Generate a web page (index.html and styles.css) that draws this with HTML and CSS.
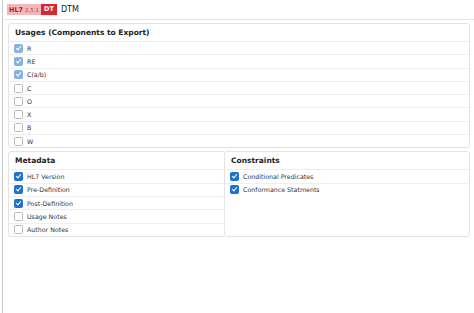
FILE: index.html
```html
<!DOCTYPE html>
<html lang="en">
<head>
    <meta charset="UTF-8">
    <title>DTM Export</title>
    <link rel="stylesheet" href="styles.css">
</head>
<body>
    <div class="page">
        <div class="header">
            <span class="badge"><b>HL7</b> <small>2.5.1</small></span><span class="badge-dt">DT</span>
            <span class="name">DTM</span>
        </div>
        <div class="content">
            <div class="panel">
                <div class="panel-title">Usages (Components to Export)</div>
                <div class="row"><span class="box faded"></span>R</div>
                <div class="row"><span class="box faded"></span>RE</div>
                <div class="row"><span class="box faded"></span>C(a/b)</div>
                <div class="row"><span class="box"></span>C</div>
                <div class="row"><span class="box"></span>O</div>
                <div class="row"><span class="box"></span>X</div>
                <div class="row"><span class="box"></span>B</div>
                <div class="row"><span class="box"></span>W</div>
            </div>
            <div class="columns">
                <div class="panel">
                    <div class="panel-title">Metadata</div>
                    <div class="row"><span class="box checked"></span>HL7 Version</div>
                    <div class="row"><span class="box checked"></span>Pre-Definition</div>
                    <div class="row"><span class="box checked"></span>Post-Definition</div>
                    <div class="row"><span class="box"></span>Usage Notes</div>
                    <div class="row"><span class="box"></span>Author Notes</div>
                </div>
                <div class="panel">
                    <div class="panel-title">Constraints</div>
                    <div class="row"><span class="box checked"></span>Conditional Predicates</div>
                    <div class="row"><span class="box checked"></span>Conformance Statments</div>
                </div>
            </div>
        </div>
    </div>
</body>
</html>
```
FILE: styles.css
```css
body {
    margin: 0;
    font-family: 'DejaVu Sans', Verdana, sans-serif;
    color: #333;
    background: #fff;
}

.page {
    margin-left: 2px;
    border-left: 1px solid #c8c8c8;
    min-height: 313px;
    box-sizing: border-box;
}

.header {
    height: 20px;
    box-sizing: border-box;
    border-bottom: 1px solid #e6e6e6;
    display: flex;
    align-items: center;
    padding-left: 4px;
}

.badge {
    background: #f3b6ba;
    color: #a8232b;
    font-size: 6px;
    padding: 1px 2px;
    height: 9px;
    line-height: 9px;
}

.badge b {
    font-size: 6.5px;
}

.badge small {
    font-size: 5.5px;
    color: #b8474f;
}

.badge-dt {
    background: #d9262f;
    color: #fff;
    font-weight: bold;
    font-size: 6.5px;
    padding: 1px 3px;
    height: 9px;
    line-height: 9px;
}

.name {
    font-size: 8px;
    margin-left: 4px;
    color: #222;
}

.content {
    padding: 3px 4px 0 5px;
    display: flex;
    flex-direction: column;
    gap: 3px;
}

.panel {
    border: 1px solid #e4e4e4;
    border-radius: 3px;
}

.panel-title {
    height: 17px;
    line-height: 17px;
    font-weight: bold;
    font-size: 7.5px;
    padding-left: 6px;
    border-bottom: 1px solid #ececec;
    color: #222;
}

.row {
    height: 12.3px;
    border-bottom: 1px solid #efefef;
    display: flex;
    align-items: center;
    font-size: 6.3px;
    padding-left: 5px;
}

.panel > .row:last-child {
    border-bottom: none;
}

.box {
    width: 7px;
    height: 7px;
    border: 1px solid #b9b9b9;
    border-radius: 1.5px;
    margin-right: 4px;
    background: #fff;
    position: relative;
}

.box.checked {
    background: #1f72d1;
    border-color: #1f72d1;
}

.box.faded {
    background: #87b2e2;
    border-color: #87b2e2;
}

.box.checked::after,
.box.faded::after {
    content: '';
    position: absolute;
    left: 2px;
    top: 0px;
    width: 2px;
    height: 4px;
    border-right: 1.2px solid #fff;
    border-bottom: 1.2px solid #fff;
    transform: rotate(40deg);
}

.columns {
    display: grid;
    grid-template-columns: 216px 1fr;
}

.columns .panel:first-child {
    border-right: none;
    border-radius: 3px 0 0 3px;
}
```
